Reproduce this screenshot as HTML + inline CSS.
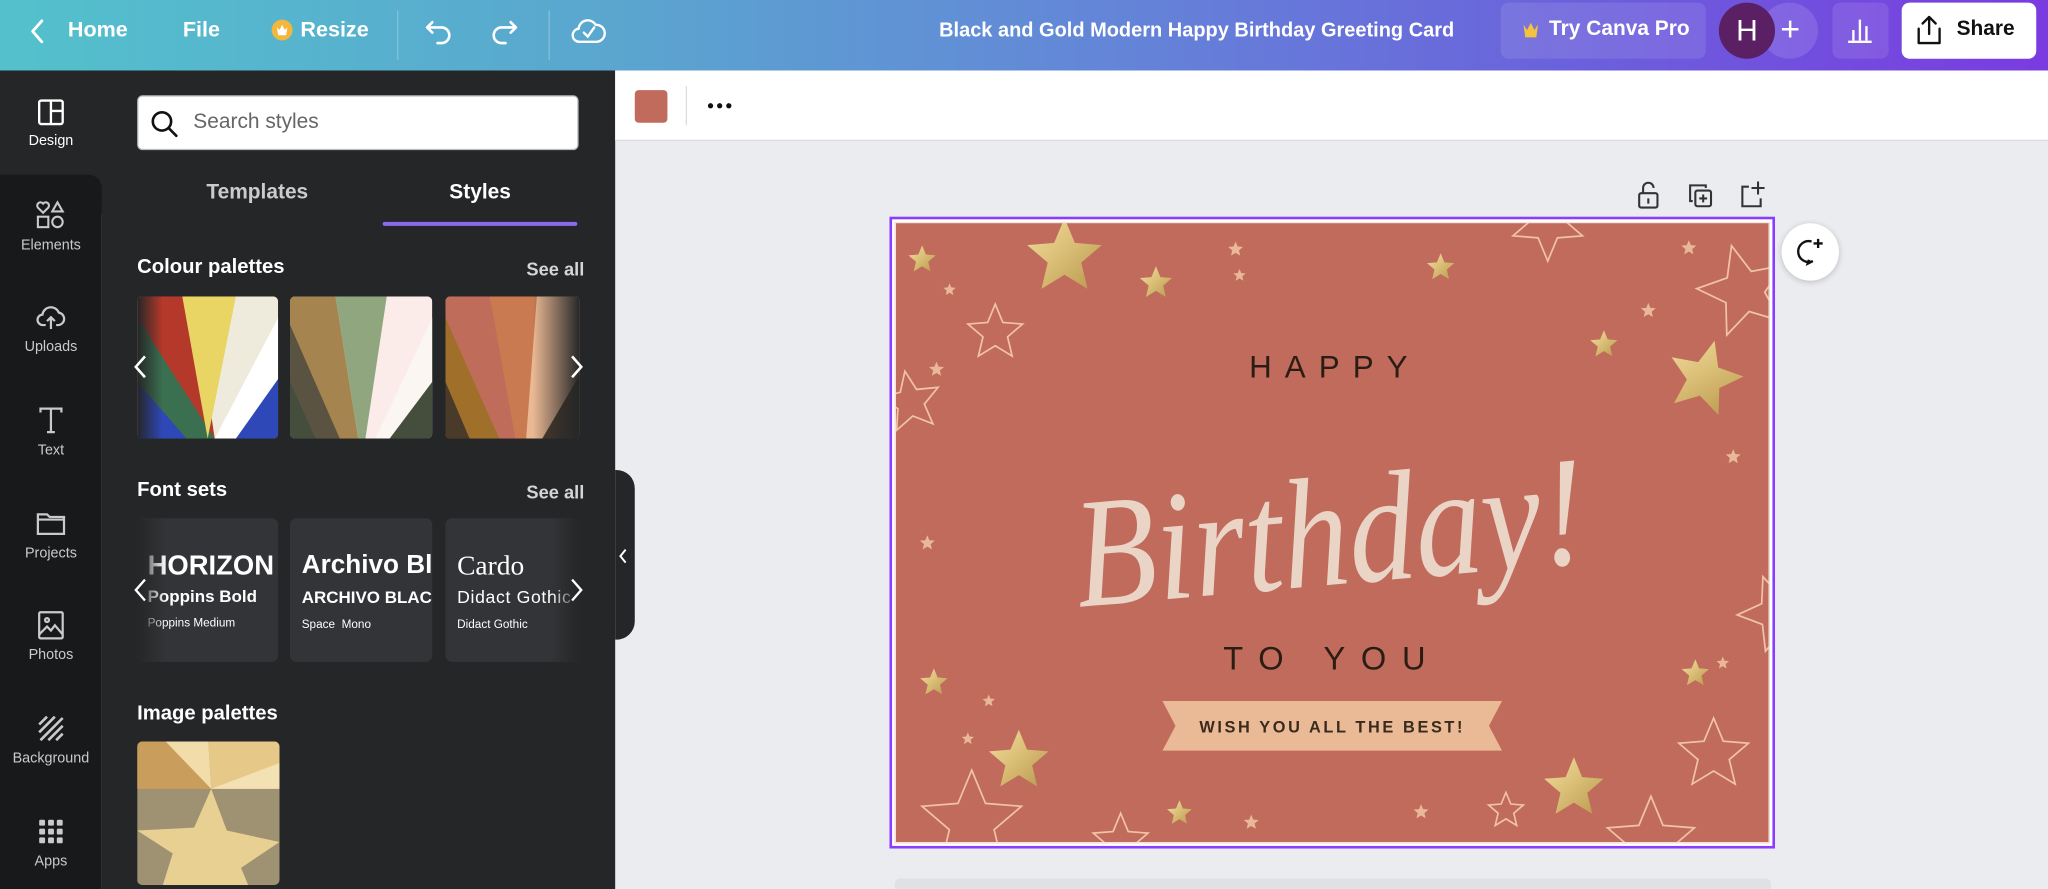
<!DOCTYPE html>
<html><head><meta charset="utf-8">
<style>
html,body{margin:0;padding:0;width:2048px;height:889px;overflow:hidden;background:#ebecf0;font-family:"Liberation Sans",sans-serif}
#w{position:absolute;left:0;top:0;width:1568px;height:681px;transform-origin:0 0;transform:scale(1.30612,1.30543);overflow:hidden;background:#ebecf0}
.a{position:absolute}
.top{left:0;top:0;width:1568px;height:54px;background:linear-gradient(90deg,#53c1cc 0%,#5aa6cf 30%,#6484d8 55%,#6b5fdc 78%,#7a3be0 100%);color:#fff}
.tt{position:absolute;top:14px;font-size:16.5px;font-weight:bold;color:#fff;white-space:nowrap}
.rail{left:0;top:54px;width:78px;height:627px;background:#18191b}
.panel{left:78px;top:54px;width:393px;height:627px;background:#252627}
.ri{position:absolute;left:0;width:78px;text-align:center;color:#c9cacc;font-size:11px}
.ri svg{display:block;margin:0 auto 5px}
.h{position:absolute;color:#fff;font-weight:bold;font-size:16px}
.sa{position:absolute;color:#d5d5d5;font-size:14px;font-weight:bold}
.tile{position:absolute;border-radius:4px;overflow:hidden}
.ft{position:absolute;top:397px;height:110px;background:#333437;border-radius:5px;overflow:hidden;color:#fff}
</style></head><body><div id="w">

<div class="a top">
  <svg class="a" style="left:22px;top:14px" width="14" height="20" viewBox="0 0 14 20"><path d="M10 2L3 10l7 8" fill="none" stroke="#fff" stroke-width="2.2" stroke-linecap="round" stroke-linejoin="round"/></svg>
  <div class="tt" style="left:52px">Home</div>
  <div class="tt" style="left:140px">File</div>
  <div class="a" style="left:208px;top:15px;width:16px;height:16px;border-radius:50%;background:#f4b73c"></div>
  <svg class="a" style="left:211px;top:18px" width="10" height="10" viewBox="0 0 10 10"><path d="M1 3l2 2 2-4 2 4 2-2-1 6H2z" fill="#fff"/></svg>
  <div class="tt" style="left:230px">Resize</div>
  <div class="a" style="left:304px;top:8px;width:1px;height:38px;background:rgba(255,255,255,.25)"></div>
  <svg class="a" style="left:324px;top:12px" width="24" height="24" viewBox="0 0 24 24"><path d="M7 5L3 9l4 4M3 9h11a6 6 0 0 1 0 12h-3" fill="none" stroke="#fff" stroke-width="2" stroke-linecap="round" stroke-linejoin="round"/></svg>
  <svg class="a" style="left:374px;top:12px" width="24" height="24" viewBox="0 0 24 24"><path d="M17 5l4 4-4 4M21 9H10a6 6 0 0 0 0 12h3" fill="none" stroke="#fff" stroke-width="2" stroke-linecap="round" stroke-linejoin="round"/></svg>
  <div class="a" style="left:420px;top:8px;width:1px;height:38px;background:rgba(255,255,255,.25)"></div>
  <svg class="a" style="left:437px;top:11px" width="27" height="27" viewBox="0 0 27 27"><path d="M7 21a5 5 0 0 1-1-10 7 7 0 0 1 13-3 6 6 0 0 1 1 13z" fill="none" stroke="#fff" stroke-width="1.8"/><path d="M10 14l3 3 5-7" fill="none" stroke="#fff" stroke-width="1.8" stroke-linecap="round"/></svg>
  <div class="tt" style="left:719px;font-size:15.3px;top:15px">Black and Gold Modern Happy Birthday Greeting Card</div>
  <div class="a" style="left:1149px;top:2px;width:157px;height:43px;border-radius:6px;background:rgba(255,255,255,.1)"></div>
  <svg class="a" style="left:1165px;top:16px" width="14" height="14" viewBox="0 0 10 10"><path d="M1 2l2 3 2-4 2 4 2-3-1 7H2z" fill="#f4c23c"/></svg>
  <div class="tt" style="left:1186px;font-size:16px">Try Canva Pro</div>
  <div class="a" style="left:1348px;top:2px;width:44px;height:43px;border-radius:50%;background:rgba(255,255,255,.12)"></div>
  <div class="a" style="left:1316px;top:2px;width:43px;height:43px;border-radius:50%;background:#5b1f63;color:#fff;font-size:23px;text-align:center;line-height:43px">H</div>
  <div class="a" style="left:1363px;top:7px;color:#fff;font-size:26px">+</div>
  <div class="a" style="left:1403px;top:2px;width:43px;height:43px;border-radius:6px;background:rgba(255,255,255,.1)"></div>
  <svg class="a" style="left:1412px;top:12px" width="24" height="22" viewBox="0 0 24 22"><path d="M3 20h18M7 19V11M12 19V3M17 19V8" stroke="#fff" stroke-width="1.8" fill="none"/></svg>
  <div class="a" style="left:1456px;top:2px;width:103px;height:43px;border-radius:6px;background:#fff"></div>
  <svg class="a" style="left:1466px;top:11px" width="22" height="24" viewBox="0 0 22 24"><path d="M11 15V2M6 7l5-5 5 5M3 11v11h16V11" fill="none" stroke="#111" stroke-width="1.8" stroke-linecap="round" stroke-linejoin="round"/></svg>
  <div class="tt" style="left:1498px;color:#111;font-size:16px">Share</div>
</div>

<div class="a rail"></div>
<div class="a" style="left:0;top:54px;width:78px;height:80px;background:#252627"></div>
<div class="a" style="left:0;top:134px;width:78px;height:20px;background:#252627"></div>
<div class="a" style="left:0;top:134px;width:78px;height:30px;background:#18191b;border-top-right-radius:10px"></div>

<div class="ri" style="top:75px;color:#fff"><svg width="22" height="22" viewBox="0 0 22 22"><rect x="2" y="2" width="18" height="18" rx="1.5" fill="none" stroke="#fff" stroke-width="1.8"/><path d="M11 2v18M11 10h9" stroke="#fff" stroke-width="1.8"/></svg>Design</div>
<div class="ri" style="top:153px"><svg width="24" height="24" viewBox="0 0 24 24" fill="none" stroke="#c9cacc" stroke-width="1.6"><path d="M6 10L2 6a2.2 2.2 0 0 1 4-3 2.2 2.2 0 0 1 4 3z"/><path d="M17 2l4 7h-8z"/><rect x="2" y="13" width="8" height="8"/><circle cx="17" cy="17" r="4"/></svg>Elements</div>
<div class="ri" style="top:231px"><svg width="24" height="24" viewBox="0 0 24 24" fill="none" stroke="#c9cacc" stroke-width="1.7"><path d="M8 18H6a4 4 0 0 1-.5-8A6.5 6.5 0 0 1 18 8.5a4.8 4.8 0 0 1 0 9.5h-2"/><path d="M12 21v-9M9 15l3-3 3 3"/></svg>Uploads</div>
<div class="ri" style="top:310px"><svg width="24" height="24" viewBox="0 0 24 24" fill="none" stroke="#c9cacc" stroke-width="1.7"><path d="M4 6V3h16v3M12 3v18M9 21h6"/></svg>Text</div>
<div class="ri" style="top:389px"><svg width="24" height="24" viewBox="0 0 24 24" fill="none" stroke="#c9cacc" stroke-width="1.7"><path d="M2 5h7l2 2h11v13H2z M2 9h20"/></svg>Projects</div>
<div class="ri" style="top:467px"><svg width="24" height="24" viewBox="0 0 24 24" fill="none" stroke="#c9cacc" stroke-width="1.7"><rect x="3" y="2" width="18" height="20" rx="1"/><circle cx="9" cy="8" r="1.5"/><path d="M3 19l6-6 3 3 3-4 6 7"/></svg>Photos</div>
<div class="ri" style="top:546px"><svg width="24" height="24" viewBox="0 0 24 24" fill="none" stroke="#c9cacc" stroke-width="2"><path d="M3 9l6-6M3 15L15 3M4 21L21 4M10 21l11-11M16 21l5-5"/></svg>Background</div>
<div class="ri" style="top:625px"><svg width="24" height="24" viewBox="0 0 24 24" fill="#c9cacc"><rect x="3" y="3" width="4.5" height="4.5" rx="1"/><rect x="9.8" y="3" width="4.5" height="4.5" rx="1"/><rect x="16.5" y="3" width="4.5" height="4.5" rx="1"/><rect x="3" y="9.8" width="4.5" height="4.5" rx="1"/><rect x="9.8" y="9.8" width="4.5" height="4.5" rx="1"/><rect x="16.5" y="9.8" width="4.5" height="4.5" rx="1"/><rect x="3" y="16.5" width="4.5" height="4.5" rx="1"/><rect x="9.8" y="16.5" width="4.5" height="4.5" rx="1"/><rect x="16.5" y="16.5" width="4.5" height="4.5" rx="1"/></svg>Apps</div>

<div class="a panel"></div>
<div class="a" style="left:105px;top:73px;width:338px;height:42px;background:#fff;border-radius:4px;border:1px solid #bbb;box-sizing:border-box"></div>
<svg class="a" style="left:114px;top:83px" width="24" height="24" viewBox="0 0 24 24" fill="none" stroke="#111" stroke-width="2"><circle cx="10" cy="10" r="7"/><path d="M15 15l6 6" stroke-linecap="round"/></svg>
<div class="a" style="left:148px;top:85px;font-size:16px;color:#666">Search styles</div>
<div class="a" style="left:158px;top:139px;font-size:16px;color:#ccc;font-weight:bold">Templates</div>
<div class="a" style="left:344px;top:139px;font-size:16px;color:#fff;font-weight:bold">Styles</div>
<div class="a" style="left:293px;top:170px;width:149px;height:3px;background:#8a6bf0;border-radius:2px"></div>

<div class="h" style="left:105px;top:196px;font-size:15.5px">Colour palettes</div>
<div class="sa" style="left:403px;top:198px">See all</div>
<div class="tile" style="left:105px;top:227px;width:108px;height:109px"><svg width="108" height="109" viewBox="0 0 100 100" preserveAspectRatio="none"><defs><linearGradient id="fl"><stop offset="0" stop-color="#252627"/><stop offset="1" stop-color="#252627" stop-opacity="0"/></linearGradient></defs><rect width="100" height="100" fill="#efebdc"/><polygon points="0,0 40,0 55,100 0,100" fill="#b5392a"/><polygon points="0,15 55,100 0,100" fill="#3a6f4f"/><polygon points="0,60 35,100 0,100" fill="#2f48b7"/><polygon points="32,0 70,0 50,100" fill="#e9d564"/><polygon points="100,15 100,58 70,100 55,100" fill="#fff"/><polygon points="100,58 100,100 70,100" fill="#2f48b7"/><rect width="18" height="100" fill="url(#fl)"/></svg></div>
<div class="tile" style="left:222px;top:227px;width:109px;height:109px"><svg width="109" height="109" viewBox="0 0 100 100" preserveAspectRatio="none"><rect width="100" height="100" fill="#fbecea"/><polygon points="0,0 32,0 48,100 0,100" fill="#a5844f"/><polygon points="0,20 35,100 0,100" fill="#5b5342"/><polygon points="0,60 18,100 0,100" fill="#454d3d"/><polygon points="32,0 68,0 53,100 48,100" fill="#8fa67e"/><polygon points="100,15 100,60 70,100 60,100" fill="#fbf6f2"/><polygon points="100,60 100,100 70,100" fill="#454d3d"/></svg></div>
<div class="tile" style="left:341px;top:227px;width:103px;height:109px"><svg width="103" height="109" viewBox="0 0 100 100" preserveAspectRatio="none"><defs><linearGradient id="fr"><stop offset="0.65" stop-color="#252627" stop-opacity="0"/><stop offset="1" stop-color="#252627"/></linearGradient></defs><rect width="100" height="100" fill="#eab994"/><polygon points="0,0 33,0 55,100 0,100" fill="#bf6c5b"/><polygon points="0,15 40,100 0,100" fill="#a06f2a"/><polygon points="0,60 18,100 0,100" fill="#4a3a2a"/><polygon points="33,0 68,0 60,100 52,100" fill="#c97a50"/><polygon points="100,55 100,100 72,100" fill="#4a3a2a"/><rect width="100" height="100" fill="url(#fr)"/></svg></div>
<svg class="a" style="left:101px;top:271px" width="12" height="20" viewBox="0 0 12 20"><path d="M10 2L3 10l7 8" fill="none" stroke="#fff" stroke-width="2"/></svg>
<svg class="a" style="left:436px;top:271px" width="12" height="20" viewBox="0 0 12 20"><path d="M2 2l7 8-7 8" fill="none" stroke="#fff" stroke-width="2"/></svg>

<div class="h" style="left:105px;top:367px;font-size:15.5px">Font sets</div>
<div class="sa" style="left:403px;top:369px">See all</div>
<div class="ft" style="left:105px;width:108px"><div class="a" style="left:8px;top:25px;font:900 21px 'Liberation Sans',sans-serif;white-space:nowrap">HORIZON</div><div class="a" style="left:8px;top:52px;font-weight:bold;font-size:13px;white-space:nowrap">Poppins Bold</div><div class="a" style="left:8px;top:75px;font-size:9px;white-space:nowrap">Poppins Medium</div><div class="a" style="left:0;top:0;width:22px;height:110px;background:linear-gradient(90deg,#252627,rgba(37,38,39,0))"></div></div>
<div class="ft" style="left:222px;width:109px"><div class="a" style="left:9px;top:25px;font:bold 20px 'Liberation Sans',sans-serif;white-space:nowrap">Archivo Black</div><div class="a" style="left:9px;top:53px;font-weight:bold;font-size:13px;white-space:nowrap">ARCHIVO BLACK</div><div class="a" style="left:9px;top:76px;font-size:9px;white-space:nowrap">Space&nbsp; Mono</div></div>
<div class="ft" style="left:341px;width:103px"><div class="a" style="left:9px;top:24px;font:21px 'Liberation Serif',serif;white-space:nowrap">Cardo</div><div class="a" style="left:9px;top:53px;font-size:13.5px;white-space:nowrap;letter-spacing:.5px">Didact Gothic</div><div class="a" style="left:9px;top:76px;font-size:9px;white-space:nowrap">Didact Gothic</div><div class="a" style="right:0;top:0;width:22px;height:110px;background:linear-gradient(270deg,#252627,rgba(37,38,39,0))"></div></div>
<svg class="a" style="left:101px;top:442px" width="12" height="20" viewBox="0 0 12 20"><path d="M10 2L3 10l7 8" fill="none" stroke="#fff" stroke-width="1.8"/></svg>
<svg class="a" style="left:436px;top:442px" width="12" height="20" viewBox="0 0 12 20"><path d="M2 2l7 8-7 8" fill="none" stroke="#fff" stroke-width="1.8"/></svg>

<div class="h" style="left:105px;top:538px;font-size:15.5px">Image palettes</div>
<div class="tile" style="left:105px;top:568px;width:109px;height:110px"><svg width="109" height="110" viewBox="0 0 100 100" preserveAspectRatio="none"><rect width="100" height="100" fill="#9e9273"/><rect width="100" height="33" fill="#c99d5c"/><polygon points="20,0 50,0 52,33" fill="#f1dcaa"/><polygon points="50,0 100,0 100,20 52,33" fill="#e6c888"/><polygon points="52,33 100,15 100,33" fill="#f3e1b4"/><polygon points="52,33 63,62 100,70 73,88 78,100 40,100 18,100 25,78 0,62 40,60" fill="#e8cf92"/></svg></div>

<div class="a" style="left:471px;top:360px;width:15px;height:130px;background:#252627;border-radius:0 14px 14px 0"></div>
<svg class="a" style="left:473px;top:420px" width="8" height="12" viewBox="0 0 8 12"><path d="M6 1L2 6l4 5" fill="none" stroke="#fff" stroke-width="1.5"/></svg>

<div class="a" style="left:471px;top:54px;width:1097px;height:53px;background:#fff;border-bottom:1px solid #dcdde0"></div>
<div class="a" style="left:486px;top:69px;width:25px;height:25px;border-radius:3px;background:#c06b5c"></div>
<div class="a" style="left:525px;top:66px;width:1px;height:30px;background:#ddd"></div>
<div class="a" style="left:542px;top:79px;width:4px;height:4px;border-radius:50%;background:#111;box-shadow:7px 0 #111,14px 0 #111"></div>

<svg class="a" style="left:1250px;top:138px" width="24" height="24" viewBox="0 0 24 24" fill="none" stroke="#333" stroke-width="1.6"><path d="M8 10V6a4 4 0 0 1 8 0"/><rect x="5" y="10" width="14" height="11" rx="1.5"/><path d="M12 14v4"/></svg>
<svg class="a" style="left:1290px;top:138px" width="24" height="24" viewBox="0 0 24 24" fill="none" stroke="#333" stroke-width="1.6"><path d="M6 16H4V4h12v2"/><rect x="8" y="8" width="12" height="12" rx="1.5"/><path d="M14 11v6M11 14h6"/></svg>
<svg class="a" style="left:1329px;top:137px" width="24" height="24" viewBox="0 0 24 24" fill="none" stroke="#333" stroke-width="1.6"><path d="M10 6H5v15h14v-6M17 2v10M12 7h10"/></svg>
<div class="a" style="left:1364px;top:171px;width:44px;height:44px;border-radius:50%;background:#fff;box-shadow:0 1px 5px rgba(0,0,0,.2)"></div>
<svg class="a" style="left:1374px;top:181px" width="24" height="24" viewBox="0 0 24 24" fill="none" stroke="#111" stroke-width="1.8"><path d="M13 4a8 8 0 1 0 1 15l-4 2 1-3"/><path d="M18 2v7M14.5 5.5h7"/></svg>

<div class="a" style="left:685px;top:673px;width:671px;height:10px;background:#e0e1e5;border-radius:4px"></div>

<div class="a" style="left:681px;top:166px;width:674px;height:480px;border:2px solid #8b3dff;background:#fff"></div>
<svg class="a" style="left:685px;top:170px" width="670" height="476" viewBox="685 170 670 476">
<defs>
<polygon id="s" points="0,-1 0.264,-0.364 0.951,-0.309 0.428,0.139 0.588,0.809 0,0.45 -0.588,0.809 -0.428,0.139 -0.951,-0.309 -0.264,-0.364"/>
<linearGradient id="g" x1="0" y1="0" x2="1" y2="1"><stop offset="0" stop-color="#f2dea0"/><stop offset=".5" stop-color="#d9bd74"/><stop offset="1" stop-color="#b8974e"/></linearGradient>
</defs>
<rect x="685" y="170" width="670" height="476" fill="#c06b5c"/>
<g fill="url(#g)">
<use href="#s" transform="translate(815,197) scale(30)"/><use href="#s" transform="translate(706,199) scale(11)"/><use href="#s" transform="translate(885,217) scale(13)"/><use href="#s" transform="translate(1103,205) scale(11)"/><use href="#s" transform="translate(1305,290) scale(30) rotate(15)"/><use href="#s" transform="translate(1228,264) scale(11)"/><use href="#s" transform="translate(715,523) scale(11)"/><use href="#s" transform="translate(780,583) scale(24)"/><use href="#s" transform="translate(1205,604) scale(24)"/><use href="#s" transform="translate(903,623) scale(10)"/><use href="#s" transform="translate(1298,516) scale(11)"/>
</g>
<g fill="#e9b898">
<use href="#s" transform="translate(727,222) scale(5)"/><use href="#s" transform="translate(946,191) scale(6)"/><use href="#s" transform="translate(949,211) scale(5)"/><use href="#s" transform="translate(1293,190) scale(6)"/><use href="#s" transform="translate(1262,238) scale(6)"/><use href="#s" transform="translate(1327,350) scale(6)"/><use href="#s" transform="translate(710,416) scale(6)"/><use href="#s" transform="translate(717,283) scale(6)"/><use href="#s" transform="translate(757,537) scale(5)"/><use href="#s" transform="translate(741,566) scale(5)"/><use href="#s" transform="translate(958,630) scale(6)"/><use href="#s" transform="translate(1088,622) scale(6)"/><use href="#s" transform="translate(1319,508) scale(5)"/>
</g>
<g fill="none" stroke="#f0c3a6">
<use href="#s" stroke-width="0.06" transform="translate(762,255) scale(22)"/>
<use href="#s" stroke-width="0.055" transform="translate(697,308) scale(24) rotate(-10)"/>
<use href="#s" stroke-width="0.047" transform="translate(1185,172) scale(28) rotate(180)"/>
<use href="#s" stroke-width="0.037" transform="translate(1335,223) scale(36) rotate(-15)"/>
<use href="#s" stroke-width="0.044" transform="translate(1360,470) scale(30) rotate(-20)"/>
<use href="#s" stroke-width="0.047" transform="translate(1312,578) scale(28)"/>
<use href="#s" stroke-width="0.09" transform="translate(1153,621) scale(14)"/>
<use href="#s" stroke-width="0.033" transform="translate(744,630) scale(40)"/>
<use href="#s" stroke-width="0.06" transform="translate(858,645) scale(22)"/>
<use href="#s" stroke-width="0.038" transform="translate(1264,645) scale(35)"/>
</g>
<text x="1022" y="289" text-anchor="middle" font-family="Liberation Sans,sans-serif" font-size="24" letter-spacing="10" fill="#2b1d14">HAPPY</text>
<text x="822" y="448" textLength="392" lengthAdjust="spacingAndGlyphs" font-family="Liberation Serif,serif" font-style="italic" font-size="120" fill="#ead4c6" transform="rotate(-5 1017 410)">Birthday!</text>
<text x="1020" y="513" text-anchor="middle" font-family="Liberation Sans,sans-serif" font-size="25" letter-spacing="12" fill="#2b1d14">TO YOU</text>
<polygon points="890,537 1150,537 1140,556 1150,575 890,575 900,556" fill="#eab995"/>
<text x="1020" y="561" text-anchor="middle" font-family="Liberation Sans,sans-serif" font-weight="bold" font-size="12.5" letter-spacing="2" fill="#3a2a1c">WISH YOU ALL THE BEST!</text>
<rect x="685.5" y="170.5" width="669" height="475" fill="none" stroke="#f2e4e0" stroke-width="1"/>
</svg>

</div></body></html>
